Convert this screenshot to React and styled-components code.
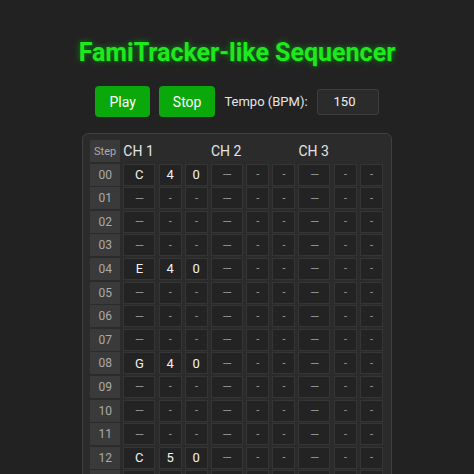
import React, { useState } from 'react'
import styled, { createGlobalStyle } from 'styled-components'

const GlobalStyle = createGlobalStyle`
    html, body {
        margin: 0;
        padding: 0;
        background: #222222;
        font-family: Roboto, "Liberation Sans", Arial, sans-serif;
        color: #e0e0e0;
    }
`

const Page = styled.div`
    display: flex;
    flex-direction: column;
    align-items: center;
    padding-top: 38px;
`

const Title = styled.h1`
    margin: 0;
    font-size: 25px;
    line-height: 30px;
    font-weight: 700;
    color: #1ee81e;
    text-shadow: 1px 1px 0 #0a6a0a, 0 0 6px rgba(0, 255, 0, 0.45);
`

const Controls = styled.div`
    display: flex;
    align-items: center;
    gap: 9px;
    margin-top: 18px;
`

const Button = styled.button`
    height: 31px;
    padding: 0 ${p => p.$pad}px;
    border: none;
    border-radius: 4px;
    background: #0aa80a;
    color: #ffffff;
    font-family: inherit;
    font-size: 14px;
    cursor: pointer;
`

const Label = styled.span`
    font-size: 13px;
    color: #e6e6e6;
`

const TempoInput = styled.input`
    box-sizing: border-box;
    width: 62px;
    height: 26px;
    padding: 0 0 0 16px;
    background: #2b2b2b;
    border: 1px solid #3f3f3f;
    border-radius: 3px;
    color: #eeeeee;
    font-family: inherit;
    font-size: 13px;
    outline: none;
`

const Panel = styled.div`
    margin-top: 16px;
    padding: 6px 8px 8px 7px;
    background: #2b2b2b;
    border: 1px solid #404040;
    border-radius: 6px;
`

const Grid = styled.div`
    display: grid;
    grid-template-columns: 30px repeat(3, 32px 23px 23px);
    grid-auto-rows: 22px;
    column-gap: 3.2px;
    row-gap: 1.6px;
`

const StepCell = styled.div`
    display: flex;
    align-items: center;
    justify-content: center;
    background: #3a3a3a;
    color: #ababab;
    font-size: ${p => (p.$head ? 11 : 12)}px;
`

const ChannelHead = styled.div`
    grid-column: span 3;
    display: flex;
    align-items: center;
    font-size: 14px;
    color: #e4e4e4;
`

const Cell = styled.div`
    box-sizing: border-box;
    display: flex;
    align-items: center;
    justify-content: center;
    background: #232323;
    border: 1px solid #353535;
    color: ${p => (p.$empty ? '#a0a0a0' : '#f2f2f2')};
    font-size: ${p => (p.$empty ? 11 : 13)}px;
    letter-spacing: ${p => (p.$empty ? '-0.5px' : '0')};
`

const notes = {
    0: ['C', '4', '0'],
    4: ['E', '4', '0'],
    8: ['G', '4', '0'],
    12: ['C', '5', '0'],
}

const rows = Array.from({ length: 16 }, (_, i) => i)

export default function App() {
    const [tempo, setTempo] = useState('150')

    return (
        <Page>
            <GlobalStyle />
            <Title>FamiTracker-like Sequencer</Title>
            <Controls>
                <Button $pad={14}>Play</Button>
                <Button $pad={14}>Stop</Button>
                <Label>Tempo (BPM):</Label>
                <TempoInput value={tempo} onChange={e => setTempo(e.target.value)} />
            </Controls>
            <Panel>
                <Grid>
                    <StepCell $head>Step</StepCell>
                    <ChannelHead>CH 1</ChannelHead>
                    <ChannelHead>CH 2</ChannelHead>
                    <ChannelHead>CH 3</ChannelHead>
                    {rows.map(r => (
                        <React.Fragment key={r}>
                            <StepCell>{String(r).padStart(2, '0')}</StepCell>
                            {[0, 1, 2].map(ch => {
                                const n = ch === 0 ? notes[r] : null
                                return (
                                    <React.Fragment key={ch}>
                                        <Cell $empty={!n}>{n ? n[0] : '---'}</Cell>
                                        <Cell $empty={!n}>{n ? n[1] : '-'}</Cell>
                                        <Cell $empty={!n}>{n ? n[2] : '-'}</Cell>
                                    </React.Fragment>
                                )
                            })}
                        </React.Fragment>
                    ))}
                </Grid>
            </Panel>
        </Page>
    )
}
